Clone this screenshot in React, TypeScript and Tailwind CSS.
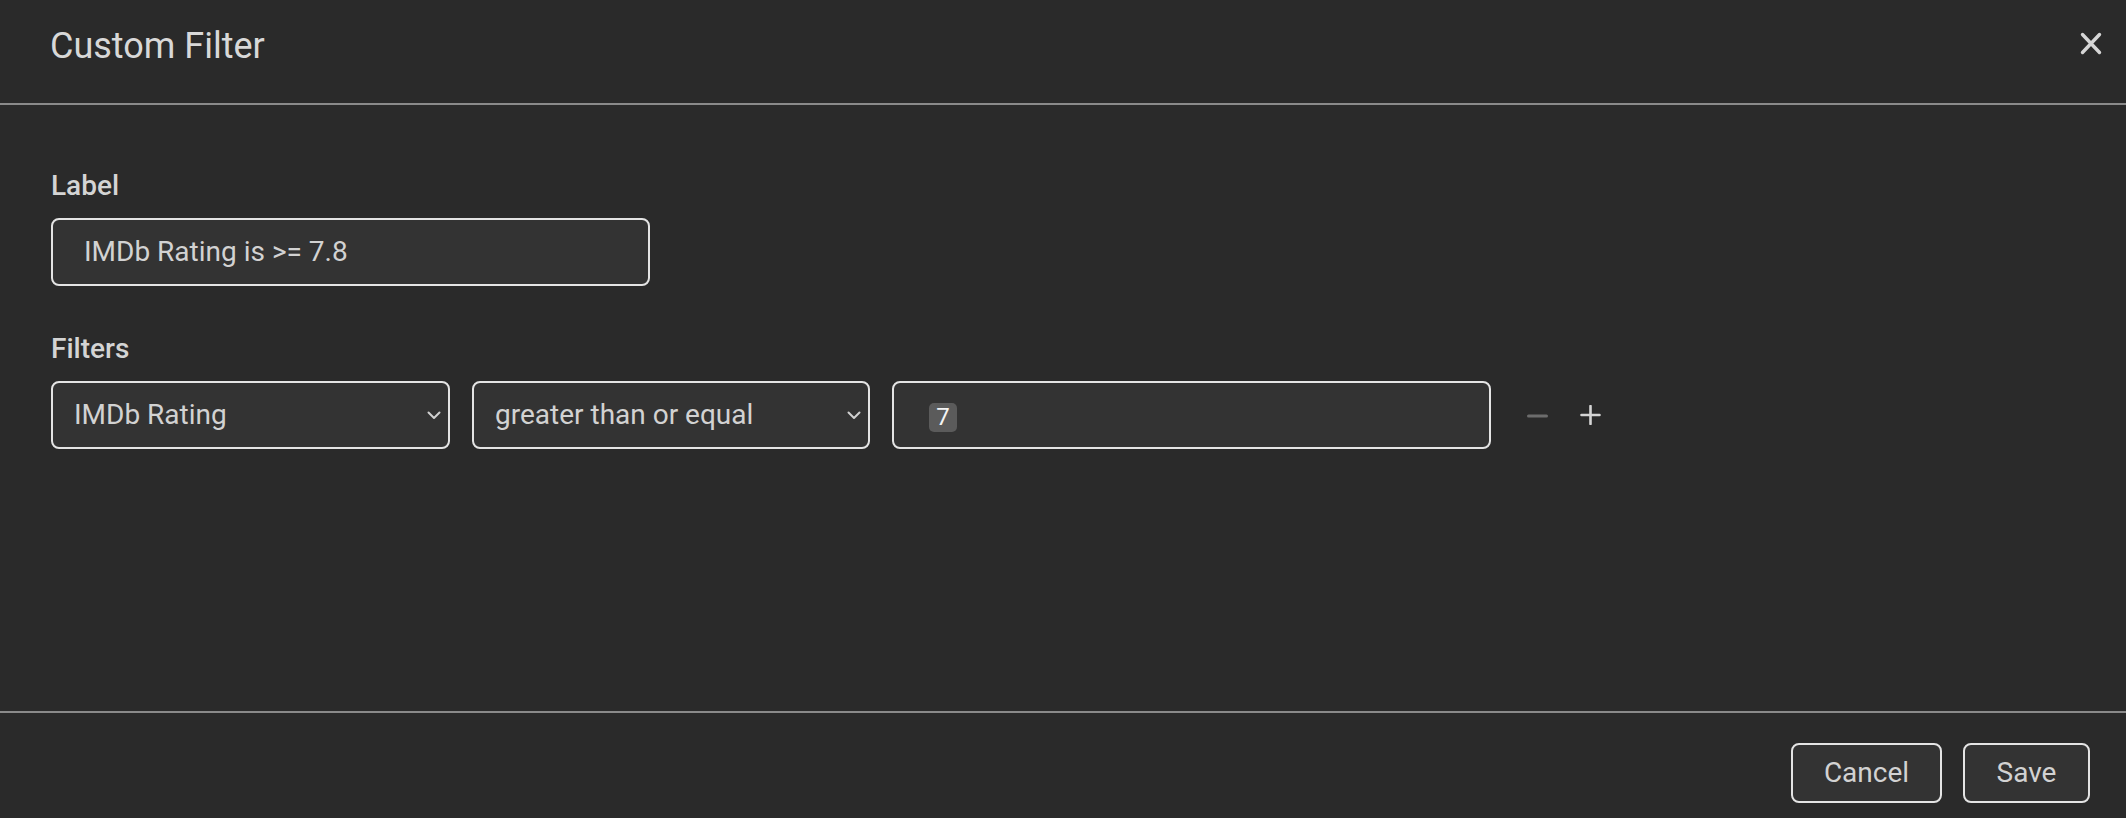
import React from "react";

function Chevron() {
  return (
    <svg width="14" height="9" viewBox="0 0 14 9" fill="none" className="shrink-0">
      <path d="M1.5 1.5 7 7l5.5-5.5" stroke="#d0d0d0" strokeWidth="2" strokeLinecap="round" strokeLinejoin="round" />
    </svg>
  );
}

function SelectBox({ value, width }: { value: string; width: string }) {
  return (
    <div
      className={`${width} h-[68px] flex items-center justify-between border-2 border-[#e4e4e4] rounded-[8px] bg-[#333333] pl-[21px] pr-[7px]`}
    >
      <span className="text-[28px] leading-[32px] text-[#d2d2d2]">{value}</span>
      <Chevron />
    </div>
  );
}

export default function App() {
  return (
    <div className="h-[818px] w-full flex flex-col bg-[#2a2a2a] font-['Roboto',sans-serif] text-[#d4d4d4]">
      <div className="h-[105px] shrink-0 flex justify-between border-b-2 border-[#8a8a8a] pl-[50px] pr-[24px]">
        <h1 className="pt-[24px] text-[36px] leading-[44px] text-[#d8d8d8]">Custom Filter</h1>
        <button className="mt-[32px] self-start h-[23px] w-[22px]" aria-label="Close">
          <svg width="22" height="23" viewBox="0 0 22 23" fill="none">
            <path d="M2.5 2.5 19.5 20.5M19.5 2.5 2.5 20.5" stroke="#d6d6d6" strokeWidth="3.4" strokeLinecap="round" />
          </svg>
        </button>
      </div>

      <div className="flex-1 px-[51px] pt-[65px]">
        <div className="text-[28px] leading-[32px] font-medium text-[#d4d4d4]">Label</div>
        <div className="mt-[16px] w-[599px] h-[68px] flex items-center border-2 border-[#e4e4e4] rounded-[8px] bg-[#333333] pl-[31px]">
          <span className="text-[28px] leading-[32px] text-[#d2d2d2]">IMDb Rating is &gt;= 7.8</span>
        </div>

        <div className="mt-[47px] text-[28px] leading-[32px] font-medium text-[#d4d4d4]">Filters</div>
        <div className="mt-[16px] flex items-center gap-[22px]">
          <SelectBox value="IMDb Rating" width="w-[399px]" />
          <SelectBox value="greater than or equal" width="w-[398px]" />
          <div className="w-[599px] h-[68px] flex items-center border-2 border-[#e4e4e4] rounded-[8px] bg-[#333333] pl-[35px] pt-[4px]">
            <span className="w-[28px] h-[29px] flex items-center justify-center rounded-[5px] bg-[#5b5b5b] text-[24px] leading-none text-[#f4f4f4]">
              7
            </span>
          </div>
          <div className="ml-[14px] flex items-center gap-[32px]">
            <button aria-label="Remove" className="h-[20px] w-[21px] flex items-center">
              <svg width="21" height="20" viewBox="0 0 21 20" fill="none">
                <path d="M1.5 11h18" stroke="#6c6c6c" strokeWidth="3" strokeLinecap="round" />
              </svg>
            </button>
            <button aria-label="Add" className="h-[20px] w-[21px] flex items-center">
              <svg width="21" height="20" viewBox="0 0 21 20" fill="none">
                <path d="M1.5 10h18M10.5 1v18" stroke="#d4d4d4" strokeWidth="2.6" strokeLinecap="round" />
              </svg>
            </button>
          </div>
        </div>
      </div>

      <div className="shrink-0 border-t-2 border-[#8a8a8a] flex justify-end gap-[21px] pt-[30px] pb-[15px] pr-[36px]">
        <button className="w-[151px] h-[60px] border-2 border-[#e4e4e4] rounded-[8px] bg-[#333333] text-[28px] leading-[32px] text-[#d2d2d2]">
          Cancel
        </button>
        <button className="w-[127px] h-[60px] border-2 border-[#e4e4e4] rounded-[8px] bg-[#333333] text-[28px] leading-[32px] text-[#d2d2d2]">
          Save
        </button>
      </div>
    </div>
  );
}
